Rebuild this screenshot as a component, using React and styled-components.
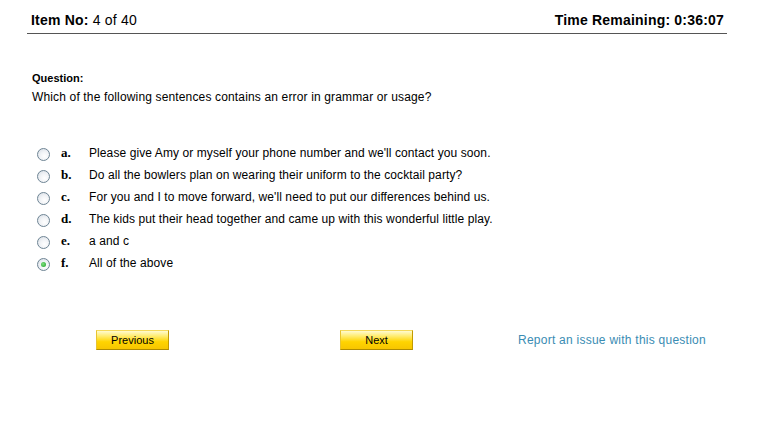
import React, { useState } from "react";
import styled, { createGlobalStyle } from "styled-components";

const Global = createGlobalStyle`
  html, body { margin: 0; padding: 0; background: #fff; }
  body { font-family: "Liberation Sans", Arial, sans-serif; color: #000; }
`;

const Page = styled.div`
  width: 700px;
  margin-left: 27px;
  padding-top: 11px;
`;

const Header = styled.div`
  display: flex;
  justify-content: space-between;
  align-items: baseline;
  padding: 0 3px 4px 4px;
  border-bottom: 1px solid #555;
  font-size: 14px;
  line-height: 18px;
  letter-spacing: 0.2px;
`;

const Strong = styled.span`
  font-weight: bold;
`;

const QuestionBlock = styled.div`
  padding: 37px 0 0 5px;
`;

const QuestionLabel = styled.div`
  font-size: 11px;
  font-weight: bold;
  line-height: 14px;
`;

const QuestionText = styled.div`
  font-size: 12px;
  line-height: 14px;
  margin-top: 5px;
  letter-spacing: 0.15px;
`;

const Options = styled.div`
  display: flex;
  flex-direction: column;
  margin-top: 38px;
  padding-left: 10px;
`;

const OptionRow = styled.label`
  display: flex;
  align-items: center;
  height: 22px;
  cursor: pointer;
`;

const Radio = styled.span`
  width: 11px;
  height: 11px;
  border-radius: 50%;
  border: 1px solid #6e8494;
  background: radial-gradient(circle at 60% 65%, #fff 0%, #f1f3f6 45%, #d4dbe3 100%);
  display: flex;
  align-items: center;
  justify-content: center;
  margin-top: 2px;
`;

const Dot = styled.span`
  width: 5px;
  height: 5px;
  border-radius: 50%;
  background: radial-gradient(circle at 40% 40%, #7de07d, #1f9d2a);
`;

const Letter = styled.span`
  font-family: "Liberation Serif", "Times New Roman", serif;
  font-weight: bold;
  font-size: 13px;
  width: 28px;
  margin-left: 11px;
`;

const OptionText = styled.span`
  font-size: 12px;
  letter-spacing: 0.09px;
`;

const Footer = styled.div`
  display: flex;
  align-items: center;
  margin-top: 56px;
  padding-left: 69px;
`;

const Button = styled.button`
  width: 73px;
  height: 20px;
  padding: 0;
  font-family: "Liberation Sans", Arial, sans-serif;
  font-size: 11px;
  color: #000;
  border: 1px solid;
  border-color: #f5da5c #c29a00 #b08c00 #e8c430;
  background: linear-gradient(to bottom, #fffbd0 0%, #ffeb6a 30%, #ffd400 60%, #f7c600 100%);
  margin-right: ${(p) => p.$gap || 0}px;
  cursor: pointer;
`;

const ReportLink = styled.a`
  font-size: 12px;
  color: #3a8cb3;
  text-decoration: none;
  margin-left: 105px;
  letter-spacing: 0.25px;
  cursor: pointer;
`;

const options = [
  ["a.", "Please give Amy or myself your phone number and we'll contact you soon."],
  ["b.", "Do all the bowlers plan on wearing their uniform to the cocktail party?"],
  ["c.", "For you and I to move forward, we'll need to put our differences behind us."],
  ["d.", "The kids put their head together and came up with this wonderful little play."],
  ["e.", "a and c"],
  ["f.", "All of the above"],
];

export default function App() {
  const [sel, setSel] = useState(5);
  return (
    <>
      <Global />
      <Page>
        <Header>
          <span>
            <Strong>Item No:</Strong> 4 of 40
          </span>
          <Strong>Time Remaining: 0:36:07</Strong>
        </Header>
        <QuestionBlock>
          <QuestionLabel>Question:</QuestionLabel>
          <QuestionText>
            Which of the following sentences contains an error in grammar or usage?
          </QuestionText>
        </QuestionBlock>
        <Options>
          {options.map(([l, t], i) => (
            <OptionRow key={l} onClick={() => setSel(i)}>
              <Radio>{sel === i && <Dot />}</Radio>
              <Letter>{l}</Letter>
              <OptionText>{t}</OptionText>
            </OptionRow>
          ))}
        </Options>
        <Footer>
          <Button $gap={171}>Previous</Button>
          <Button>Next</Button>
          <ReportLink>Report an issue with this question</ReportLink>
        </Footer>
      </Page>
    </>
  );
}
